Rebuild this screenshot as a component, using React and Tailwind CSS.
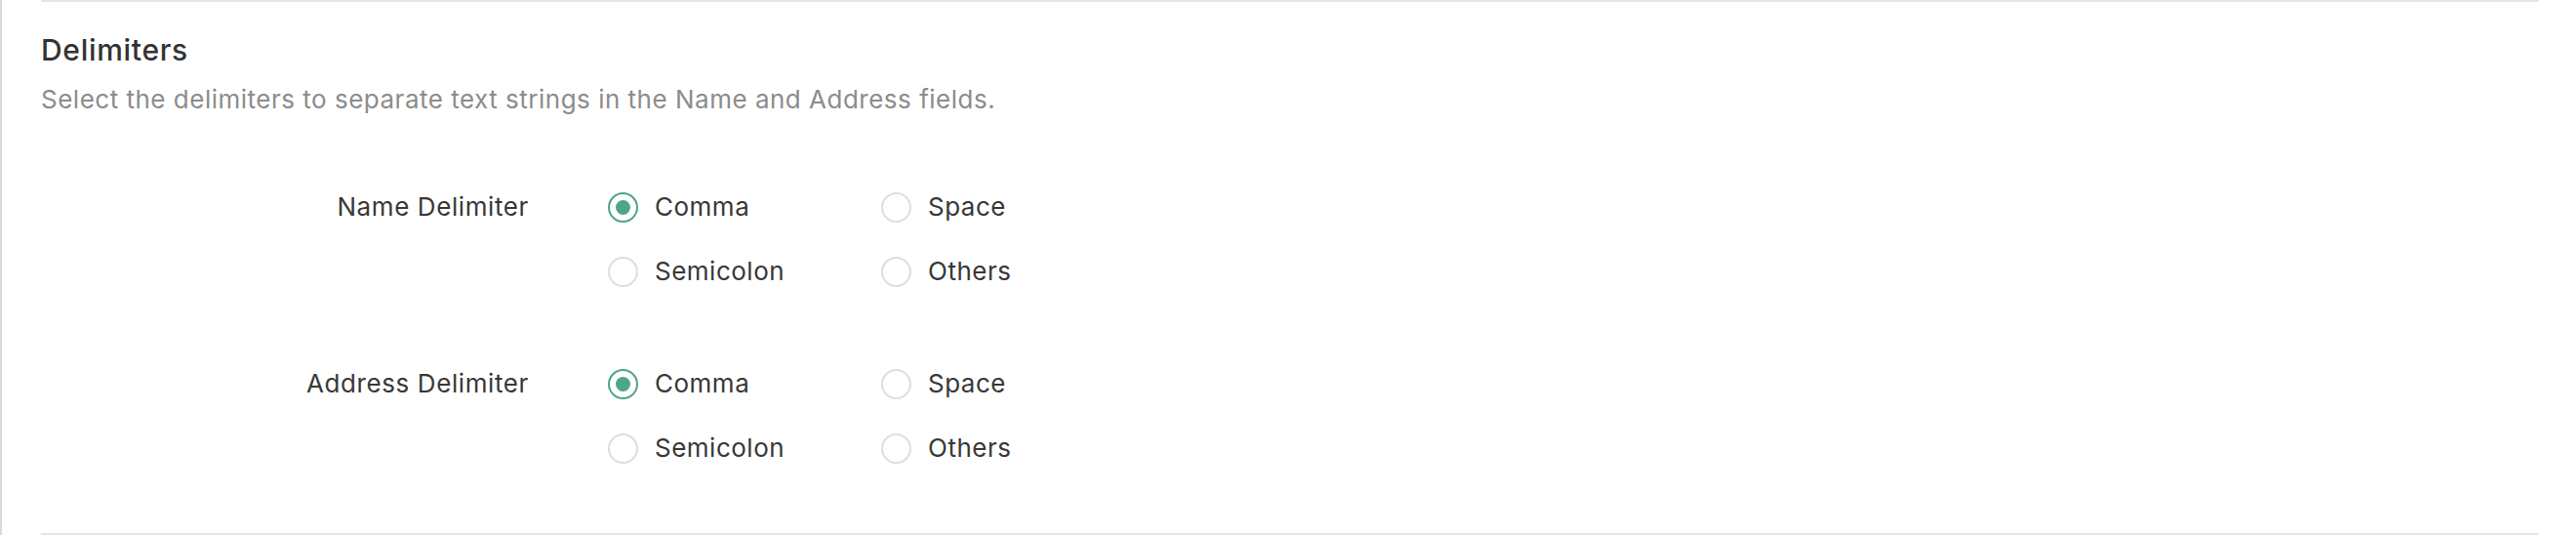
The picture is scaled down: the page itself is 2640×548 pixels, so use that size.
const delimiterGroups = [
  { label: 'Name Delimiter', name: 'name-delimiter' },
  { label: 'Address Delimiter', name: 'address-delimiter' },
];

const options = ['Comma', 'Space', 'Semicolon', 'Others'];

function Radio({ checked, label }) {
  return (
    <label className="flex h-[32px] items-center gap-[17px]">
      <span
        className={
          checked
            ? 'flex h-[31px] w-[31px] items-center justify-center rounded-full border-2 border-[#4ea58a]'
            : 'flex h-[31px] w-[31px] items-center justify-center rounded-full border-2 border-[#dedede]'
        }
      >
        {checked && <span className="h-[15px] w-[15px] rounded-full bg-[#4ea58a]" />}
      </span>
      <span className="text-[26px] leading-[32px] tracking-[0.5px] text-[#383838]">{label}</span>
    </label>
  );
}

export default function App() {
  return (
    <div className="h-[548px] border-l-2 border-[#dadada] bg-white pl-[40px] pr-[38px] font-['Inter',sans-serif]">
      <section className="flex h-full flex-col border-y-2 border-[#e6e6e6]">
        <header className="pt-[31px]">
          <h2 className="text-[30px] font-medium leading-[36px] tracking-[0.7px] text-[#333333]">
            Delimiters
          </h2>
          <p className="mt-[15px] text-[26px] leading-[36px] tracking-[0.5px] text-[#8c8c8c]">
            Select the delimiters to separate text strings in the Name and Address fields.
          </p>
        </header>

        <div className="mt-[76px] flex flex-col gap-[83px]">
          {delimiterGroups.map((group) => (
            <div key={group.name} className="flex items-start">
              <div className="w-[500px] text-right text-[26px] leading-[32px] tracking-[0.6px] text-[#383838]">
                {group.label}
              </div>
              <div className="ml-[81px] grid grid-cols-[280px_auto] gap-y-[34px]">
                {options.map((option) => (
                  <Radio key={option} label={option} checked={option === 'Comma'} />
                ))}
              </div>
            </div>
          ))}
        </div>
      </section>
    </div>
  );
}
